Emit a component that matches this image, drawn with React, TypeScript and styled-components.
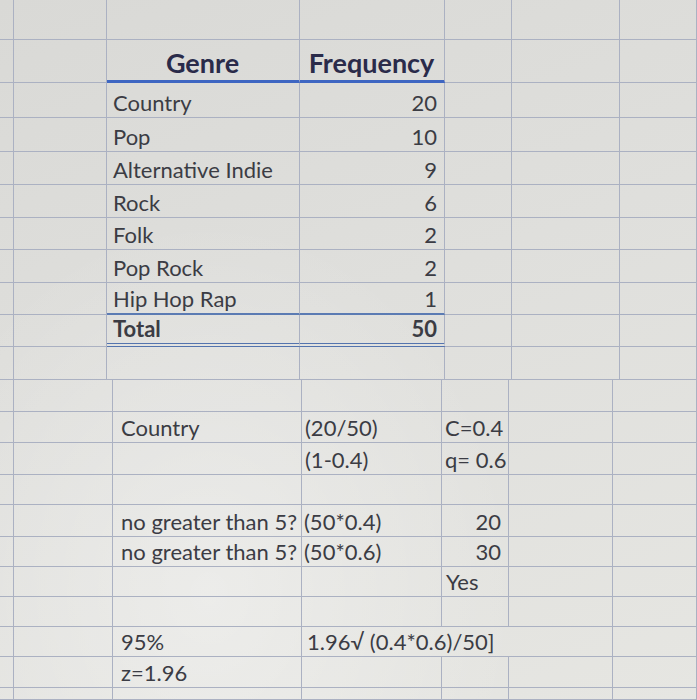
import React from 'react';
import styled, { createGlobalStyle } from 'styled-components';

const GlobalStyle = createGlobalStyle`
  html, body {
    margin: 0;
    padding: 0;
  }
  body {
    background: #dcdcd8;
    font-family: Lato, "Open Sans", sans-serif;
  }
`;

const Sheet = styled.div`
  width: 697px;
  height: 700px;
  overflow: hidden;
  background:
    radial-gradient(ellipse at 30% 85%, rgba(255, 255, 255, 0.35), transparent 45%),
    linear-gradient(160deg, #d9d9d6 0%, #dfdfdc 45%, #e6e6e2 100%);
`;

const Grid = styled.div<{ $cols: string; $rows: string }>`
  display: grid;
  grid-template-columns: ${(p) => p.$cols};
  grid-template-rows: ${(p) => p.$rows};
`;

type Line = 'grid' | 'head' | 'thin' | 'double';

const underline: Record<Line, string> = {
  grid: '1px solid #abb1c2',
  head: '3px solid #3e66c2',
  thin: '2px solid #5b7bb3',
  double: '4px double #5474ae',
};

const Cell = styled.div<{
  $align?: 'l' | 'r' | 'c';
  $bold?: boolean;
  $head?: boolean;
  $under?: Line;
  $span?: number;
  $padL?: number;
}>`
  box-sizing: border-box;
  display: flex;
  align-items: flex-end;
  justify-content: ${(p) =>
    p.$align === 'r' ? 'flex-end' : p.$align === 'c' ? 'center' : 'flex-start'};
  grid-column: span ${(p) => p.$span || 1};
  min-width: 0;
  padding: 0 7px ${(p) => (p.$head ? 1 : 1)}px ${(p) => p.$padL ?? 6}px;
  border-right: 1px solid #abb1c2;
  border-bottom: ${(p) => underline[p.$under || 'grid']};
  font-size: ${(p) => (p.$head ? 27 : 22)}px;
  line-height: 1.2;
  font-weight: ${(p) => (p.$bold ? 700 : 400)};
  color: ${(p) => (p.$head ? '#2a2b4a' : '#3b3c44')};
  white-space: nowrap;
`;

type Def = {
  t: string;
  a?: 'l' | 'r' | 'c';
  b?: boolean;
  h?: boolean;
  u?: Line;
  span?: number;
  pl?: number;
} | null;

// 7 columns: sliver, A, B, C, D, E, F
const topRows: Def[][] = [
  [],
  [null, null, { t: 'Genre', a: 'c', b: true, h: true, u: 'head' }, { t: 'Frequency', a: 'c', b: true, h: true, u: 'head' }],
  [null, null, { t: 'Country' }, { t: '20', a: 'r' }],
  [null, null, { t: 'Pop' }, { t: '10', a: 'r' }],
  [null, null, { t: 'Alternative Indie' }, { t: '9', a: 'r' }],
  [null, null, { t: 'Rock' }, { t: '6', a: 'r' }],
  [null, null, { t: 'Folk' }, { t: '2', a: 'r' }],
  [null, null, { t: 'Pop Rock' }, { t: '2', a: 'r' }],
  [null, null, { t: 'Hip Hop Rap', u: 'thin' }, { t: '1', a: 'r', u: 'thin' }],
  [null, null, { t: 'Total', b: true, u: 'double' }, { t: '50', a: 'r', b: true, u: 'double' }],
  [],
];

const bottomRows: Def[][] = [
  [],
  [null, null, { t: 'Country', pl: 8 }, { t: '(20/50)', pl: 3 }, { t: 'C=0.4', pl: 3 }],
  [null, null, null, { t: '(1-0.4)', pl: 3 }, { t: 'q= 0.6', pl: 3 }],
  [],
  [null, null, { t: 'no greater than 5?', pl: 8 }, { t: '(50*0.4)', pl: 2 }, { t: '20', a: 'r' }],
  [null, null, { t: 'no greater than 5?', pl: 8 }, { t: '(50*0.6)', pl: 2 }, { t: '30', a: 'r' }],
  [null, null, null, null, { t: 'Yes', pl: 4 }],
  [],
  [null, null, { t: '95%', pl: 8 }, { t: '1.96√ (0.4*0.6)/50]', span: 3, pl: 5 }],
  [null, null, { t: 'z=1.96', pl: 8 }],
  [],
];

const COLS = 7;

const renderRows = (rows: Def[][]) =>
  rows.flatMap((row, r) => {
    const out: React.ReactNode[] = [];
    let used = 0;
    for (let i = 0; used < COLS; i++) {
      const d = row[i] || null;
      if (d) {
        out.push(
          <Cell
            key={`${r}-${i}`}
            $align={d.a}
            $bold={d.b}
            $head={d.h}
            $under={d.u}
            $span={d.span}
            $padL={d.pl}
          >
            {d.t}
          </Cell>
        );
        used += d.span || 1;
      } else {
        out.push(<Cell key={`${r}-${i}`} />);
        used += 1;
      }
    }
    return out;
  });

export default function App() {
  return (
    <>
      <GlobalStyle />
      <Sheet>
        <Grid
          $cols="3px 104px 193px 145px 67px 108px 1fr"
          $rows="40px 43px 35px 34px 33px 33px 32px 33px 32px 32px 33px"
        >
          {renderRows(topRows)}
        </Grid>
        <Grid
          $cols="8px 105px 189px 140px 67px 104px 1fr"
          $rows="32px 31px 32px 30px 32px 30px 30px 30px 30px 31px 12px"
        >
          {renderRows(bottomRows)}
        </Grid>
      </Sheet>
    </>
  );
}
